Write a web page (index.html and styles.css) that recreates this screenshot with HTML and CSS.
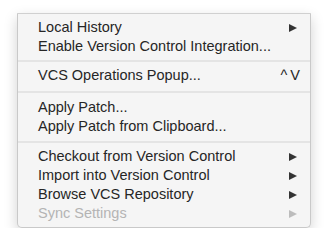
FILE: index.html
```html
<!DOCTYPE html>
<html>
<head>
<meta charset="utf-8">
<link rel="stylesheet" href="styles.css">
</head>
<body>
<div class="menu">
  <div class="item"><span class="label">Local History</span><span class="arrow"></span></div>
  <div class="item"><span class="label">Enable Version Control Integration...</span></div>
  <div class="sep s1"></div>
  <div class="item"><span class="label">VCS Operations Popup...</span><span class="shortcut">^&#8201;V</span></div>
  <div class="sep s2"></div>
  <div class="item"><span class="label">Apply Patch...</span></div>
  <div class="item"><span class="label">Apply Patch from Clipboard...</span></div>
  <div class="sep s3"></div>
  <div class="item"><span class="label">Checkout from Version Control</span><span class="arrow"></span></div>
  <div class="item"><span class="label">Import into Version Control</span><span class="arrow"></span></div>
  <div class="item"><span class="label">Browse VCS Repository</span><span class="arrow"></span></div>
  <div class="item disabled"><span class="label">Sync Settings</span><span class="arrow"></span></div>
</div>
</body>
</html>
```
FILE: styles.css
```css
html, body {
  margin: 0;
  padding: 0;
  background: #ffffff;
}
body {
  padding: 13px 0 0 17px;
}
.menu {
  box-sizing: border-box;
  width: 294px;
  height: 215px;
  background: #f5f5f5;
  border: 1px solid #c9c9c9;
  border-top-color: #d0d0d0;
  border-radius: 1px 1px 5px 5px;
  box-shadow: 0 5px 14px rgba(0, 0, 0, 0.18);
  padding: 4px 13px 4px 20px;
  font-family: "Liberation Sans", Arial, sans-serif;
  font-size: 14.5px;
  color: #262626;
}
.item {
  display: flex;
  align-items: center;
  justify-content: space-between;
  height: 19px;
  line-height: 19px;
  white-space: nowrap;
}
.disabled {
  color: #b4b4b4;
}
.arrow {
  width: 0;
  height: 0;
  border-top: 4.5px solid transparent;
  border-bottom: 4.5px solid transparent;
  border-left: 8px solid #333333;
}
.disabled .arrow {
  border-left-color: #bcbcbc;
}
.shortcut {
  margin-right: -3px;
}
.sep {
  display: flex;
  align-items: center;
  margin: 0 -13px 0 -20px;
}
.sep::before {
  content: "";
  display: block;
  width: 100%;
  height: 2px;
  background: #e4e4e4;
}
.s1 { height: 10px; }
.s2 { height: 13px; }
.s3 { height: 11px; }
```
